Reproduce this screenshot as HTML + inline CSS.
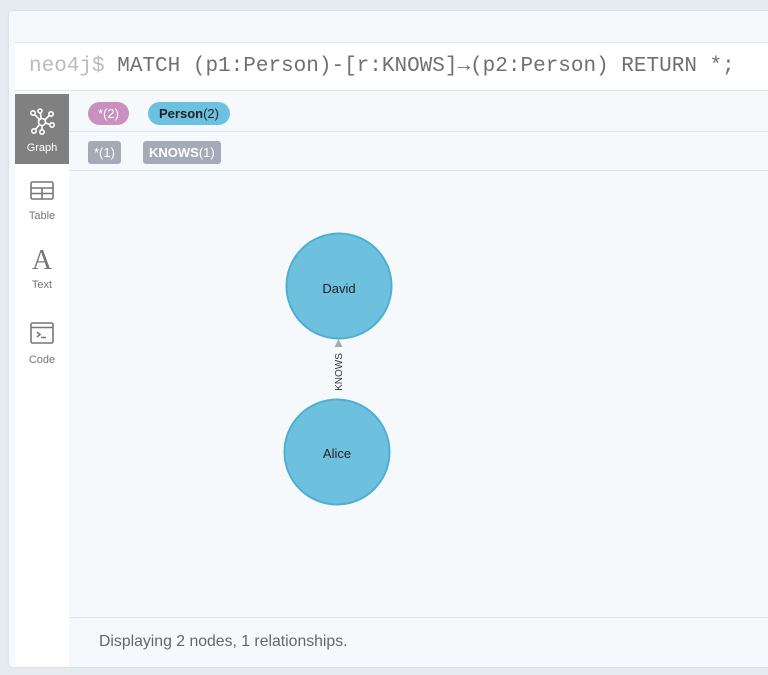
<!DOCTYPE html>
<html><head><style>
body{margin:0;width:768px;height:675px;background:#e6ebf2;font-family:"Liberation Sans",sans-serif;overflow:hidden;position:relative}
.card{position:absolute;left:9px;top:11px;width:770px;height:656px;background:#f6f9fc;border-radius:3px;box-shadow:0 0 2px rgba(0,0,0,.12)}
.ed{position:absolute;left:15px;top:42px;width:760px;height:47px;background:#fff;border-top:1px solid #dde5ee;border-bottom:1px solid #dde5ee;font-family:"Liberation Mono",monospace;font-size:21px;line-height:47px;color:#707070;white-space:pre}
.ed span{color:#bbb;margin-left:14px}
.side{position:absolute;left:15px;top:94px;width:54px;height:573px;background:#fff}
.gb{position:absolute;left:15px;top:94px;width:54px;height:70px;background:#808080;color:#fff;font-size:11px;text-align:center}
.it{position:absolute;left:15px;width:54px;text-align:center;font-size:11px;color:#777}
.row{position:absolute;left:70px;width:700px;border-bottom:1px solid #dde5ee}
.pill{position:absolute;font-size:13px;height:23px;line-height:23px;padding:0 10px;border-radius:12px}
.tag{position:absolute;font-size:13px;height:23px;line-height:23px;padding:0 6px;border-radius:3px;background:#a5abb6;color:#fff}
.foot{position:absolute;left:70px;top:617px;width:700px;border-top:1px solid #dde5ee;font-size:15.8px;color:#666}
</style></head><body>
<div class="card"></div>
<div class="ed"><span>neo4j$</span> MATCH (p1:Person)-[r:KNOWS]→(p2:Person) RETURN *;</div>
<div class="side"></div>
<div class="gb">
<svg width="28" height="28" viewBox="0 0 28 28" style="margin-top:14px" fill="none" stroke="#fff" stroke-width="1.6">
<circle cx="14" cy="14" r="3.5"/><circle cx="5" cy="5" r="2.2"/><circle cx="12" cy="3" r="2"/><circle cx="23" cy="6" r="2.2"/><circle cx="24" cy="17" r="2.2"/><circle cx="6" cy="23" r="2.2"/><circle cx="14" cy="24" r="2.2"/>
<path d="M11.5 11.5L6.5 6.5M13 10.5L12.5 5M16.8 12L21.3 7.5M17.4 15L21.9 16.5M11.5 16.5L7.5 21.5M14 17.5V21.8"/></svg>
<div style="margin-top:3px">Graph</div></div>
<div class="it" style="top:181px"><svg width="24" height="20" viewBox="0 0 24 20" fill="none" stroke="#777" stroke-width="1.6"><rect x="1" y="1" width="22" height="17" rx="1.5"/><path d="M1 7H23M1 12.5H23M12 7V18"/></svg><div style="margin-top:6px">Table</div></div>
<div class="it" style="top:248px"><div style="font-family:'Liberation Serif',serif;font-size:28px;line-height:26px;font-weight:300">A</div><div style="margin-top:5px">Text</div></div>
<div class="it" style="top:322px"><svg width="24" height="22" viewBox="0 0 24 22" fill="none" stroke="#777" stroke-width="1.6"><rect x="1" y="1" width="22" height="20" rx="1.5"/><path d="M1 5.5H23M7 10L10 12.5L7 15M11 15.5H16"/></svg><div style="margin-top:7px">Code</div></div>
<div class="row" style="top:94px;height:37px"></div>
<div class="row" style="top:132px;height:38px"></div>
<div class="pill" style="left:88px;top:102px;background:#c990c0;color:#fff">*(2)</div>
<div class="pill" style="left:148px;top:102px;background:#6dc1e0;color:#222;padding:0 11px"><b>Person</b>(2)</div>
<div class="tag" style="left:88px;top:141px">*(1)</div>
<div class="tag" style="left:143px;top:141px"><b>KNOWS</b>(1)</div>
<svg style="position:absolute;left:0;top:0" width="768" height="675">
<circle cx="339" cy="286" r="52.5" fill="#6dc1df" stroke="#4fafd2" stroke-width="2"/>
<circle cx="337" cy="452" r="52.5" fill="#6dc1df" stroke="#4fafd2" stroke-width="2"/>
<path d="M334.5 347L338.5 339L342.5 347Z" fill="#aaa"/>
<text x="0" y="0" transform="translate(342,372) rotate(-90)" text-anchor="middle" font-size="10" fill="#333" font-family="Liberation Sans">KNOWS</text>
<text x="339" y="293" text-anchor="middle" font-size="13" fill="#222" font-family="Liberation Sans">David</text>
<text x="337" y="458" text-anchor="middle" font-size="13" fill="#222" font-family="Liberation Sans">Alice</text>
</svg>
<div class="foot"><div style="margin:15px 0 0 29px">Displaying 2 nodes, 1 relationships.</div></div>
</body></html>
